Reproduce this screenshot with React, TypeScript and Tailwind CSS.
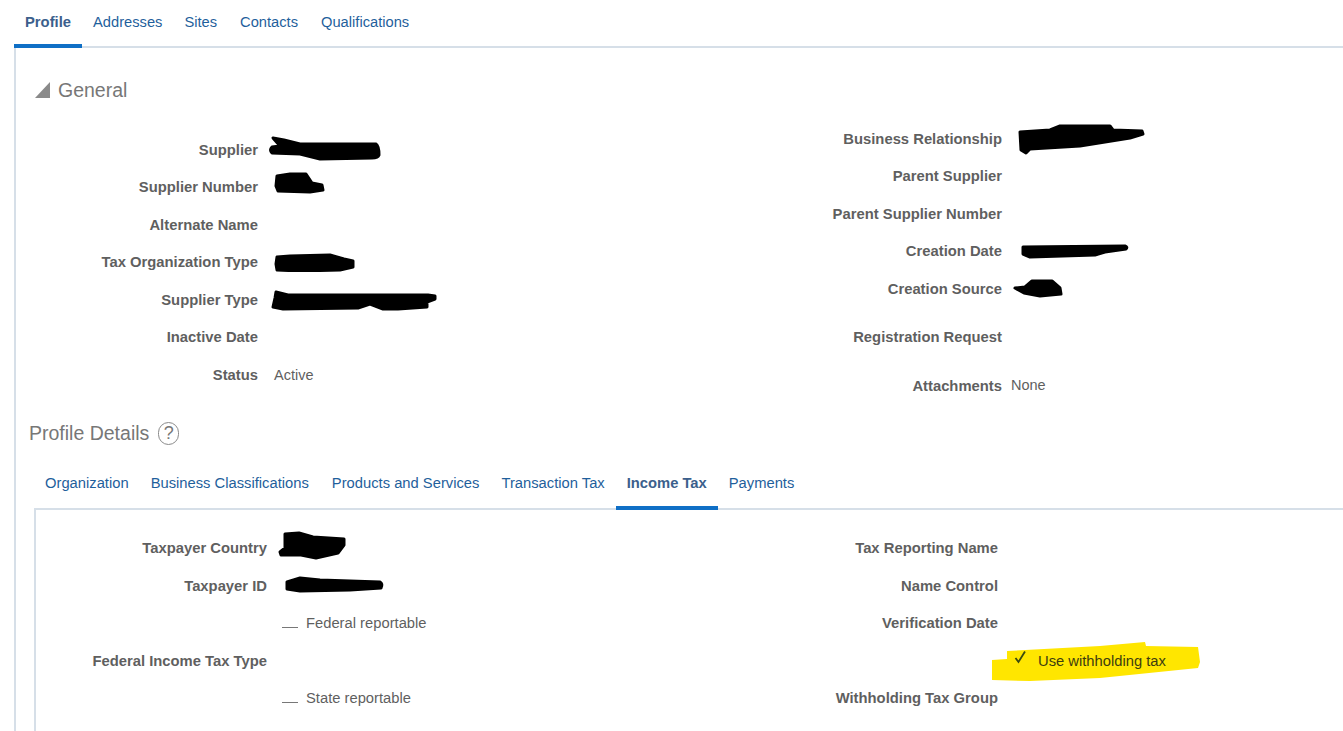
import React from "react";

const font = { fontFamily: '"Liberation Sans", Arial, sans-serif' };

// redaction marks, drawn in page coordinates via the viewBox
const Scribble: React.FC<{ box: [number, number, number, number]; d: string; className?: string }> = ({ box, d, className }) => (
  <svg
    viewBox={box.join(" ")}
    width={box[2]}
    height={box[3]}
    className={"shrink-0 block " + (className || "")}
  >
    <path d={d} fill="#000" stroke="#000" strokeWidth="3" strokeLinejoin="round" />
  </svg>
);

const Row: React.FC<{ label: string; labelW: string; h?: string; children?: React.ReactNode }> = ({ label, labelW, h, children }) => (
  <div className={"flex items-center " + (h || "h-[37.5px]")}>
    <div className={"text-right text-[14.8px] font-bold text-[#5f5f5f] whitespace-nowrap " + labelW}>
      {label}
    </div>
    {children}
  </div>
);

const Dash = () => <span className="block w-4 h-px bg-[#777] mt-2 mr-2 shrink-0" />;

export default function App() {
  const topTabs = ["Addresses", "Sites", "Contacts", "Qualifications"];
  const subTabs = ["Organization", "Business Classifications", "Products and Services", "Transaction Tax"];

  return (
    <div style={font} className="w-[1343px] h-[731px] overflow-hidden bg-white pl-[14px]">
      {/* Top tabs */}
      <div className="flex h-[48px] border-b-2 border-[#d6dfe8]">
        <div className="h-[48px] w-[68px] border-b-4 border-[#0f6fc6] flex items-center justify-center text-[14.8px] font-bold text-[#3b5f8c]">
          Profile
        </div>
        {topTabs.map((t, i) => (
          <div
            key={t}
            className={
              "h-[46px] flex items-center pb-[1px] text-[14.7px] text-[#1f5f9c] " +
              ["ml-[11px]", "ml-[22px]", "ml-[23px]", "ml-[23px]"][i]
            }
          >
            {t}
          </div>
        ))}
      </div>

      {/* Page body */}
      <div className="border-l-2 border-[#d6dfe8] h-[683px] pt-[28px]">
        <div className="flex items-center h-[28px] ml-[19px]">
          <svg width="15" height="16" viewBox="0 0 15 16" className="block">
            <path d="M15 0V16H0Z" fill="#8a8a8a" />
          </svg>
          <span className="ml-[8px] mt-[1px] text-[19.5px] text-[#777]">General</span>
        </div>

        <div className="flex">
          <div className="w-[743px] pt-[27px]">
            <Row label="Supplier" labelW="w-[242px]">
              <Scribble
                className="ml-[10px] -mt-[2px]"
                box={[268, 135, 114, 27]}
                d="M273 138L284 140L300 144L376 144Q379 146 379 155Q378 158 372 158L320 159L300 154L272 153Q269 150 272 147L280 146Z"
              />
            </Row>
            <Row label="Supplier Number" labelW="w-[242px]">
              <Scribble
                className="ml-[16px] -mt-[8px]"
                box={[274, 171, 52, 24]}
                d="M277 176L290 174L306 174L312 183L322 185L323 190L310 192L278 191L276 186Z"
              />
            </Row>
            <Row label="Alternate Name" labelW="w-[242px]" />
            <Row label="Tax Organization Type" labelW="w-[242px]">
              <Scribble
                className="ml-[15px]"
                box={[273, 252, 84, 20]}
                d="M277 257L290 256L330 255L344 259L353 261L353 267L340 270L300 271L277 270L276 264Z"
              />
            </Row>
            <Row label="Supplier Type" labelW="w-[242px]">
              <Scribble
                className="ml-[12px] mt-[1px]"
                box={[272, 288, 168, 24]}
                d="M278 292L290 295L430 295L437 296L437 299L429 302L429 307L400 309L385 309L372 304L360 308L285 309L275 307L277 298Z"
              />
            </Row>
            <Row label="Inactive Date" labelW="w-[242px]" />
            <Row label="Status" labelW="w-[242px]">
              <span className="ml-[16px] mt-[2px] text-[14.5px] text-[#5f5f5f]">Active</span>
            </Row>
          </div>

          <div className="pt-[16px]">
            <Row label="Business Relationship" labelW="w-[243px]">
              <Scribble
                className="ml-[16px] mt-[1px]"
                box={[1018, 124, 128, 32]}
                d="M1020 133L1050 131L1060 127L1110 127L1113 131L1142 132L1143 135L1130 139L1080 147L1030 150L1026 154L1021 151Z"
              />
            </Row>
            <Row label="Parent Supplier" labelW="w-[243px]" />
            <Row label="Parent Supplier Number" labelW="w-[243px]" />
            <Row label="Creation Date" labelW="w-[243px]">
              <Scribble
                className="ml-[18px] mt-[1px]"
                box={[1020, 243, 110, 17]}
                d="M1023 247L1125 246Q1128 247 1126 249L1105 252L1095 255L1030 257L1023 254Z"
              />
            </Row>
            <Row label="Creation Source" labelW="w-[243px]">
              <Scribble
                className="ml-[10px] mt-[1px]"
                box={[1012, 278, 52, 22]}
                d="M1015 288L1025 287L1032 281L1052 281L1060 288L1061 294L1040 296L1024 293Z"
              />
            </Row>
            <Row label="Registration Request" labelW="w-[243px]" h="h-[58.5px]" />
            <Row label="Attachments" labelW="w-[243px]" h="h-[39.5px]">
              <span className="ml-[9px] text-[14.5px] text-[#5f5f5f]">None</span>
            </Row>
          </div>
        </div>

        {/* Profile Details */}
        <div className="flex items-center h-[30px] ml-[13px] mt-[12.5px]">
          <span className="mt-[2px] text-[19.5px] text-[#777]">Profile Details</span>
          <span className="ml-[9px] w-[21px] h-[23px] rounded-full border-[1.5px] border-[#8a8a8a] flex items-center justify-center text-[18px] font-light text-[#777]">
            ?
          </span>
        </div>

        <div className="ml-[18px] mt-[15px]">
          <div className="flex h-[47px] border-b-2 border-[#d6dfe8]">
            {subTabs.map((t, i) => (
              <div
                key={t}
                className={
                  "h-[45px] flex items-center pb-[5px] text-[14.75px] text-[#1f5f9c] " +
                  ["ml-[11px]", "ml-[22px]", "ml-[23px]", "ml-[22px]"][i]
                }
              >
                {t}
              </div>
            ))}
            <div className="ml-[11px] h-[47px] w-[102px] border-b-4 border-[#0f6fc6] pb-[3px] flex items-center justify-center text-[14.75px] font-bold text-[#3b5f8c]">
              Income Tax
            </div>
            <div className="ml-[11px] h-[45px] flex items-center pb-[5px] text-[14.75px] text-[#1f5f9c]">Payments</div>
          </div>

          <div className="border-l-2 border-[#d6dfe8] flex pt-[19.5px] h-[300px]">
            <div className="w-[733px]">
              <Row label="Taxpayer Country" labelW="w-[231px]">
                <Scribble
                  className="ml-[10px] -mt-[6px]"
                  box={[276, 530, 70, 30]}
                  d="M284 534L298 533L312 537L343 539L343 545L337 553L315 558L300 555L280 555L279 552L284 548Z"
                />
              </Row>
              <Row label="Taxpayer ID" labelW="w-[231px]">
                <Scribble
                  className="ml-[16px] -mt-[2px]"
                  box={[283, 576, 102, 17]}
                  d="M287 582L300 578L320 580L380 582Q383 584 381 588L350 590L300 591L287 589Z"
                />
              </Row>
              <Row label="" labelW="w-[231px]">
                <div className="ml-[15px] flex items-center">
                  <Dash />
                  <span className="text-[14.75px] text-[#5f5f5f]">Federal reportable</span>
                </div>
              </Row>
              <Row label="Federal Income Tax Type" labelW="w-[231px]" />
              <Row label="" labelW="w-[231px]">
                <div className="ml-[15px] flex items-center">
                  <Dash />
                  <span className="text-[14.75px] text-[#5f5f5f]">State reportable</span>
                </div>
              </Row>
            </div>
            <div>
              <Row label="Tax Reporting Name" labelW="w-[229px]" />
              <Row label="Name Control" labelW="w-[229px]" />
              <Row label="Verification Date" labelW="w-[229px]" />
              <Row label="" labelW="w-[229px]">
                <div className="relative ml-[16px] flex items-center">
                  {/* yellow marker stroke */}
                  <svg
                    viewBox="992 642 208 40"
                    width="208"
                    height="40"
                    className="absolute left-[-22px] top-[-8px] block"
                  >
                    <path
                      d="M1007 651L1100 646L1145 642L1146 646L1198 647L1200 662L1198 668L1100 678L1030 681L992 680L992 660L1007 659Z"
                      fill="#ffe600"
                    />
                  </svg>
                  <svg width="24" height="14" viewBox="0 0 24 14" className="relative block -mt-[7px]">
                    <path d="M1.5 8L4.5 12L11 1.5" fill="none" stroke="#3a4a10" strokeWidth="1.8" />
                  </svg>
                  <span className="relative text-[14.75px] text-[#3d3d10]">Use withholding tax</span>
                </div>
              </Row>
              <Row label="Withholding Tax Group" labelW="w-[229px]" />
            </div>
          </div>
        </div>
      </div>
    </div>
  );
}
